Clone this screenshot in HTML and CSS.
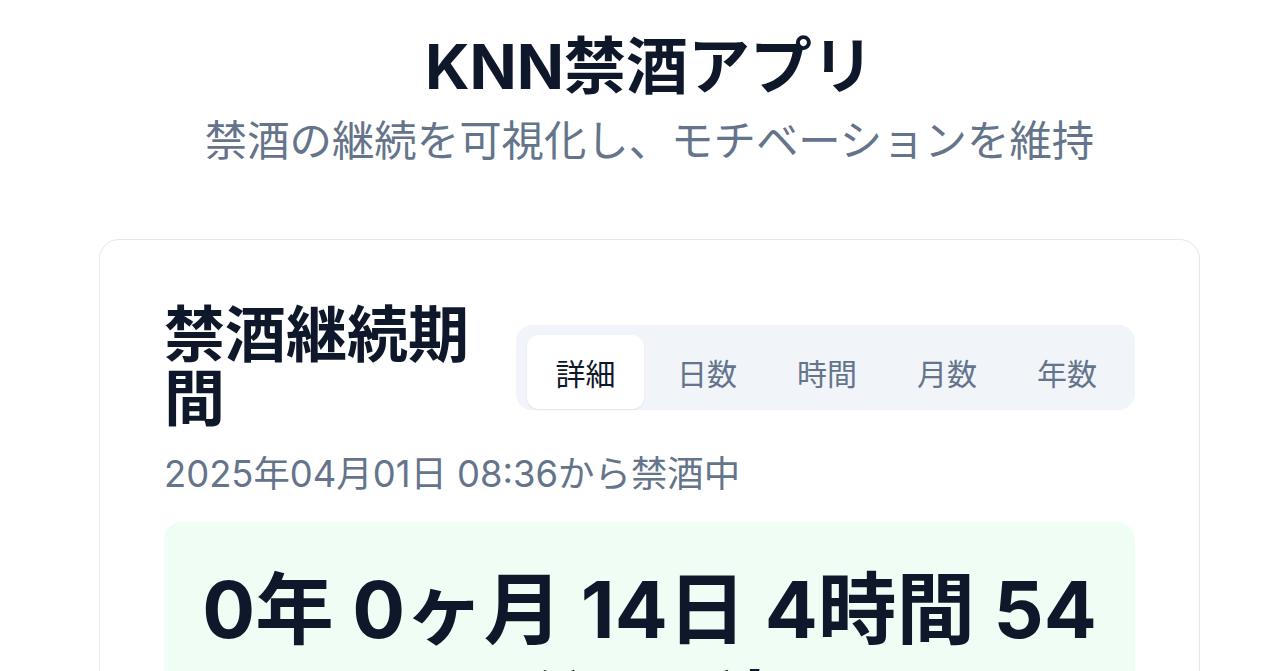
FILE: index.html
```html
<!DOCTYPE html>
<html lang="ja">
<head>
<meta charset="utf-8">
<title>KNN禁酒アプリ</title>
<link rel="stylesheet" href="styles.css">
</head>
<body>
<div class="page">
  <header class="hero">
    <h1 class="title">KNN禁酒アプリ</h1>
    <p class="subtitle">禁酒の継続を可視化し、モチベーションを維持</p>
  </header>
  <section class="card">
    <div class="card-head">
      <h2 class="card-title">禁酒継続期間</h2>
      <div class="tabs">
        <button class="tab active">詳細</button>
        <button class="tab">日数</button>
        <button class="tab">時間</button>
        <button class="tab">月数</button>
        <button class="tab">年数</button>
      </div>
    </div>
    <p class="since">2025年04月01日 08:36から禁酒中</p>
    <div class="counter">
      <p class="elapsed">0年 0ヶ月 14日 4時間 54分 12秒</p>
    </div>
  </section>
</div>
</body>
</html>
```
FILE: styles.css
```css
* { box-sizing: border-box; }
html, body { margin: 0; background: #ffffff; }
body {
  font-family: "Inter", "Noto Sans CJK JP", sans-serif;
  color: #0f172a;
  padding-left: 19px;
}
.page {
  width: 1101px;
  margin: 0 auto;
  padding-top: 30px;
}
.hero { text-align: center; }
.title {
  margin: 0;
  font-size: 62px;
  line-height: 74px;
  font-weight: 700;
  color: #0f172a;
}
.subtitle {
  margin: 9px 0 0;
  font-size: 42.4px;
  line-height: 56px;
  color: #64748b;
}
.card {
  margin-top: 70px;
  border: 1px solid #e2e8f0;
  border-radius: 20px;
  padding: 63px 64px 40px;
  background: #fff;
}
.card-head {
  display: flex;
  align-items: center;
  gap: 24px;
}
.card-title {
  flex: 1 1 auto;
  min-width: 0;
  margin: 0;
  font-size: 61px;
  line-height: 64px;
  font-weight: 700;
}
.tabs {
  flex: 0 0 auto;
  display: flex;
  background: #f1f5f9;
  border-radius: 16px;
  padding: 10px 8px 1px 11px;
}
.tab {
  width: 120px;
  height: 74px;
  border: 0;
  background: transparent;
  border-radius: 12px;
  font-family: "Inter", "Noto Sans CJK JP", sans-serif;
  font-size: 30px;
  color: #64748b;
  padding: 0;
}
.tab.active {
  width: 117px;
  margin-right: 3px;
  background: #ffffff;
  color: #0f172a;
  box-shadow: 0 1px 2px rgba(15, 23, 42, 0.08);
}
.since {
  margin: 19px 0 0;
  font-size: 36.4px;
  line-height: 48px;
  color: #64748b;
}
.counter {
  margin-top: 24px;
  background: #f0fdf4;
  border-radius: 18px;
  padding: 39px 20px;
  text-align: center;
}
.elapsed {
  margin: 0;
  font-size: 78.5px;
  line-height: 98px;
  font-weight: 700;
  color: #0f172a;
}
```
